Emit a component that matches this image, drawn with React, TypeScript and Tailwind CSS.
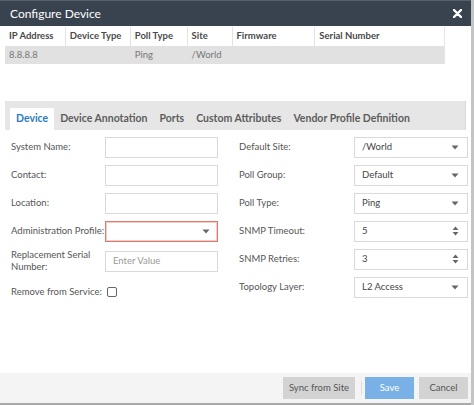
import React from "react";

const font = { fontFamily: "Lato, 'Open Sans', Arial, sans-serif" };

function Caret() {
  return (
    <svg width="8" height="5" viewBox="0 0 8 5" className="shrink-0">
      <path d="M0.5 0.5 L7.5 0.5 L4 4.5 Z" fill="#666" />
    </svg>
  );
}

function Spinner() {
  return (
    <svg width="7" height="10" viewBox="0 0 7 10" className="shrink-0">
      <path d="M0.5 4 L6.5 4 L3.5 0.5 Z" fill="#666" />
      <path d="M0.5 6 L6.5 6 L3.5 9.5 Z" fill="#666" />
    </svg>
  );
}

function TextBox({ placeholder }: { placeholder?: string }) {
  return (
    <div className="w-[113px] h-[21px] border border-[#d9d9d9] bg-white flex items-center px-[7px] text-[9.5px] text-[#999]">
      {placeholder}
    </div>
  );
}

function Select({ value, spin }: { value?: string; spin?: boolean }) {
  return (
    <div className="w-[114px] h-[21px] border border-[#d9d9d9] bg-white flex items-center justify-between pl-[7px] pr-[8px] text-[9.5px] text-[#444]">
      <span>{value}</span>
      {spin ? <Spinner /> : <Caret />}
    </div>
  );
}

// required field left empty: framed in red with a soft inner glow
function InvalidSelect() {
  return (
    <div className="w-[113px] h-[21px] p-px bg-[#e0786c]">
      <div className="w-full h-full p-px bg-[#f5cdc7]">
        <div className="w-full h-full bg-white flex items-center justify-end pr-[6px]">
          <Caret />
        </div>
      </div>
    </div>
  );
}

const columns = [
  { title: "IP Address", w: "w-[61px]", v: "8.8.8.8" },
  { title: "Device Type", w: "w-[65px]", v: "" },
  { title: "Poll Type", w: "w-[57px]", v: "Ping" },
  { title: "Site", w: "w-[45px]", v: "/World" },
  { title: "Firmware", w: "w-[83px]", v: "" },
  { title: "Serial Number", w: "w-[129px]", v: "" },
];

const tabs = ["Device Annotation", "Ports", "Custom Attributes", "Vendor Profile Definition"];

const leftRows = [
  { label: "System Name:", field: <TextBox /> },
  { label: "Contact:", field: <TextBox /> },
  { label: "Location:", field: <TextBox /> },
  { label: "Administration Profile:", field: <InvalidSelect /> },
];

const rightRows = [
  { label: "Default Site:", field: <Select value="/World" /> },
  { label: "Poll Group:", field: <Select value="Default" /> },
  { label: "Poll Type:", field: <Select value="Ping" /> },
  { label: "SNMP Timeout:", field: <Select value="5" spin /> },
  { label: "SNMP Retries:", field: <Select value="3" spin /> },
  { label: "Topology Layer:", field: <Select value="L2 Access" /> },
];

export default function App() {
  return (
    <div
      style={font}
      className="w-[474px] h-[405px] bg-white flex flex-col overflow-hidden border-r-[3px] border-[#c4c4c4]"
    >
      {/* title bar */}
      <div className="h-[26px] shrink-0 bg-[#39424f] border-t border-[#56606d] flex items-center justify-between pl-[10px] pr-[9px]">
        <span className="text-white text-[12px]">Configure Device</span>
        <svg width="9" height="9" viewBox="0 0 9 9">
          <path d="M1 1 L8 8 M8 1 L1 8" stroke="#fff" strokeWidth="2.4" strokeLinecap="round" />
        </svg>
      </div>

      {/* device table */}
      <div className="pl-[5px] pt-[1px] h-[75px] shrink-0">
        <div className="w-[440px] border-r border-[#e6e6e6]">
          <div className="flex h-[19px] items-center">
            {columns.map((c, i) => (
              <div
                key={c.title}
                className={`${c.w} h-full flex items-center pl-[4px] text-[9.5px] font-bold text-[#4a4a4a] ${
                  i < columns.length - 1 ? "border-r border-[#e3e3e3]" : ""
                }`}
              >
                {c.title}
              </div>
            ))}
          </div>
          <div className="flex h-[18px] bg-[#e1e1e1] items-center">
            {columns.map((c) => (
              <div key={c.title} className={`${c.w} pl-[4px] text-[9.5px] text-[#777]`}>
                {c.v}
              </div>
            ))}
          </div>
        </div>
      </div>

      {/* tab strip */}
      <div className="mx-[5px] h-[29px] shrink-0 bg-[#e6e6e6] flex items-end pl-[5px] border-r border-[#d8d8d8]">
        <div className="h-[22px] bg-white px-[6px] flex items-center text-[10.5px] font-bold text-[#2c7cc3]">
          Device
        </div>
        {tabs.map((t) => (
          <div
            key={t}
            className="h-[22px] px-[6px] flex items-center text-[10.5px] font-bold text-[#5d5d5d]"
          >
            {t}
          </div>
        ))}
      </div>

      {/* form */}
      <div className="flex-1 flex pt-[3px]">
        <div className="w-[237px] pl-[11px] flex flex-col">
          {leftRows.map((r) => (
            <div key={r.label} className="h-[28px] flex items-center">
              <span className="w-[94px] text-[9.5px] text-[#555]">{r.label}</span>
              {r.field}
            </div>
          ))}
          <div className="h-[32px] flex items-center">
            <span className="w-[94px] text-[9.5px] leading-[12px] text-[#555]">
              Replacement Serial Number:
            </span>
            <TextBox placeholder="Enter Value" />
          </div>
          <div className="h-[30px] flex items-center">
            <span className="text-[9.5px] text-[#555]">Remove from Service:</span>
            <span className="ml-[5px] w-[10px] h-[10px] border border-[#666] rounded-[2px] bg-white" />
          </div>
        </div>
        <div className="flex-1 pl-[2px] flex flex-col">
          {rightRows.map((r) => (
            <div key={r.label} className="h-[28px] flex items-center">
              <span className="w-[115px] text-[9.5px] text-[#555]">{r.label}</span>
              {r.field}
            </div>
          ))}
        </div>
      </div>

      {/* footer actions */}
      <div className="h-[30px] shrink-0 bg-[#f4f4f4] flex items-center justify-end pr-[3px]">
        <div className="w-[72px] h-[22px] bg-[#d3d3d3] flex items-center justify-center text-[9.5px] text-[#555]">
          Sync from Site
        </div>
        <div className="w-px h-[14px] bg-[#dcdcdc] ml-[6px] mr-[3px]" />
        <div className="w-[49px] h-[22px] bg-[#79b0e6] flex items-center justify-center text-[9.5px] text-white">
          Save
        </div>
        <div className="ml-[5px] w-[49px] h-[22px] bg-[#d3d3d3] flex items-center justify-center text-[9.5px] text-[#555]">
          Cancel
        </div>
      </div>
      <div className="h-[2px] shrink-0 bg-[#a8a8a8]" />
    </div>
  );
}
